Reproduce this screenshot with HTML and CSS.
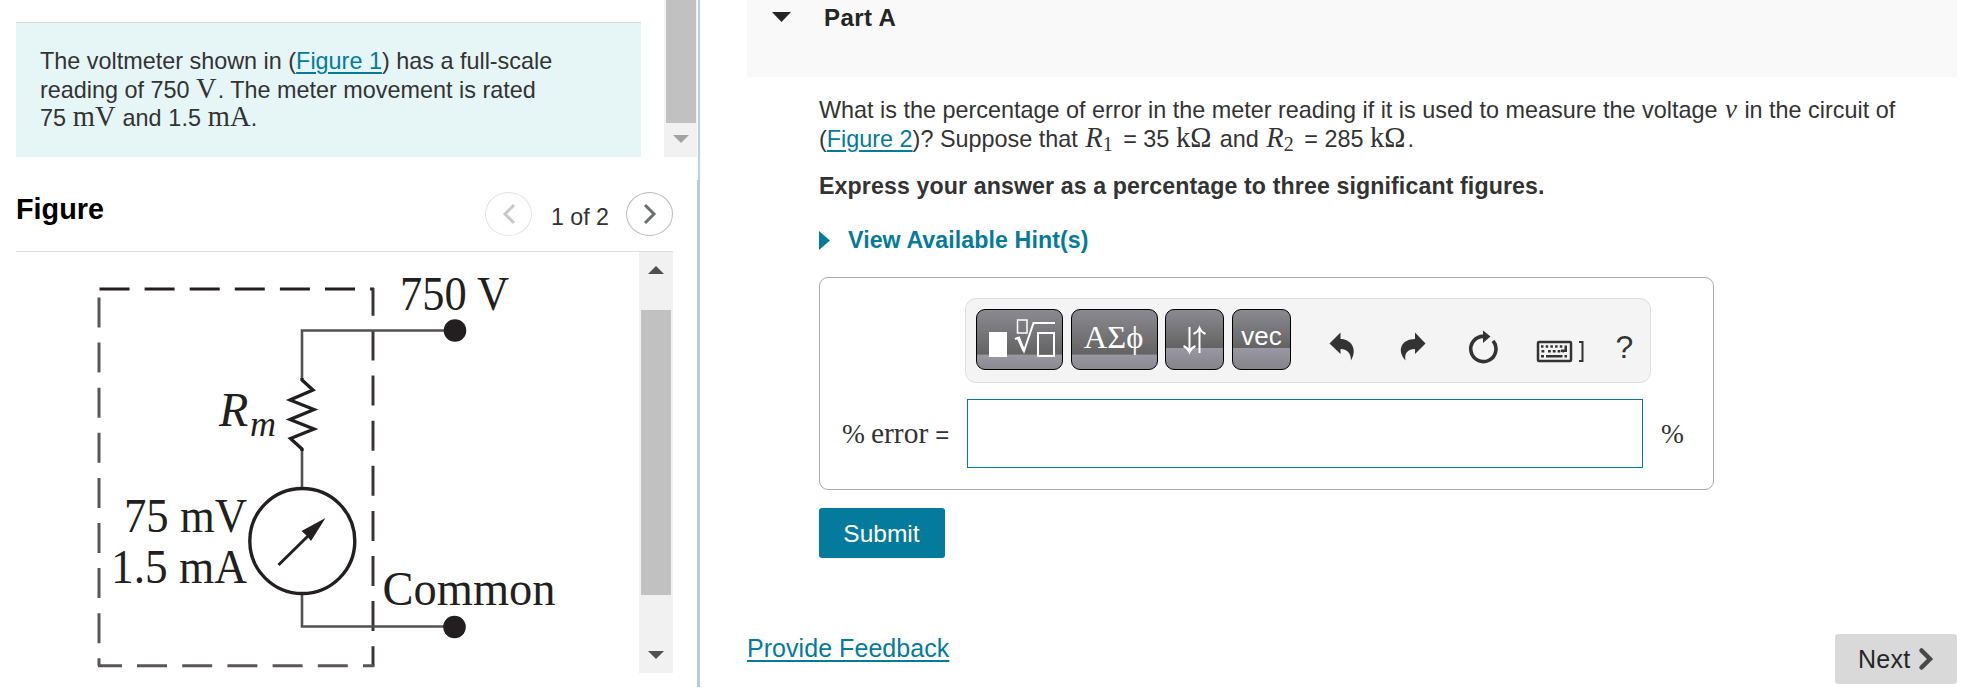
FILE: index.html
```html
<!DOCTYPE html>
<html lang="en">
<head>
<meta charset="utf-8">
<title>Part A</title>
<link rel="stylesheet" href="styles.css">
</head>
<body>
<div class="page">
  <aside class="left">
    <div class="left-main">
      <section class="intro-row">
        <div class="intro">
          <div class="ln l1">The voltmeter shown in (<a href="#">Figure 1</a>) has a full-scale</div>
          <div class="ln l2">reading of 750 <span class="m volt">V</span>. The meter movement is rated</div>
          <div class="ln l3">75 <span class="m">mV</span> and 1.5 <span class="m">mA</span>.</div>
        </div>
        <div class="bar intro-bar">
          <div class="thumb"></div>
          <svg class="arrow" width="16" height="8"><path d="M0 0H16L8 8Z" fill="#a3a3a3"/></svg>
        </div>
      </section>
      <header class="fig-head">
        <h2>Figure</h2>
        <div class="pager">
          <button class="circle off"><svg width="14" height="22" viewBox="0 0 14 22"><path d="M12 2L3 11L12 20" fill="none" stroke="#c7c7c7" stroke-width="3"/></svg></button>
          <span>1 of 2</span>
          <button class="circle"><svg width="14" height="22" viewBox="0 0 14 22"><path d="M2 2L11 11L2 20" fill="none" stroke="#6a7070" stroke-width="3"/></svg></button>
        </div>
      </header>
      <section class="fig-body">
        <svg class="circuit" width="623" height="421" viewBox="16 252 623 421">
          <g fill="none" stroke="#3a3637" stroke-width="3">
            <path d="M99.5 289H374" stroke-dasharray="30 15.1" stroke="#231f20"/>
            <path d="M99 297.5V666" stroke-dasharray="30 15.1" stroke="#5a5657"/>
            <path d="M373 288V315.7M373 330.5V666" stroke-dasharray="30 15.1"/>
            <path d="M98 665.7H122M137 665.7H349M363 665.7H374.5" stroke-dasharray="30 15.2" stroke="#5a5657"/>
            <path d="M455 330.5H302V379M302 449V488M302 594V626.5H455" stroke-width="2.6" stroke="#555152"/>
            <path d="M302 378V380L313 390L290 400L314 409.5L290 419.5L314 429L290.500 438.500L302 449V451" stroke="#231f20" stroke-width="3.300"/>
            <circle cx="302.3" cy="541" r="52.5" stroke="#231f20" stroke-width="3.400"/>
            <path d="M278.5 565L309 535" stroke="#231f20"/>
          </g>
          <g fill="#231f20">
            <path d="M325.5 518L301.5 531L307 536L311 541Z"/>
            <circle cx="455" cy="330.5" r="11.3"/>
            <circle cx="454.5" cy="627" r="11.3"/>
          </g>
          <g class="ctext">
            <text x="400" y="309.5" textLength="109" lengthAdjust="spacingAndGlyphs">750 V</text>
            <text x="219" y="426" class="it">R</text>
            <text x="250" y="435.500" class="it sub" textLength="26" lengthAdjust="spacingAndGlyphs">m</text>
            <text x="124" y="532" textLength="123" lengthAdjust="spacingAndGlyphs">75 mV</text>
            <text x="111" y="582.5" textLength="136" lengthAdjust="spacingAndGlyphs">1.5 mA</text>
            <text x="382.500" y="604.500" textLength="173" lengthAdjust="spacingAndGlyphs">Common</text>
          </g>
        </svg>
        <div class="bar fig-bar">
          <svg width="16" height="8"><path d="M0 8H16L8 0Z" fill="#505050"/></svg>
          <div class="thumb"></div>
          <svg width="16" height="8"><path d="M0 0H16L8 8Z" fill="#505050"/></svg>
        </div>
      </section>
    </div>
    <div class="divider"><div class="d1"></div><div class="d2"></div></div>
  </aside>

  <main class="right">
    <header class="part"><svg width="19" height="10"><path d="M0 0H19L9.500 10Z" fill="#252525"/></svg><h1>Part A</h1></header>
    <div class="content">
      <div class="ln q1">What is the percentage of error in the meter reading if it is used to measure the voltage <span class="m mi v">v</span> in the circuit of</div>
      <div class="ln q2">(<a href="#">Figure 2</a>)? Suppose that <span class="m var"><i>R</i><span class="s">1</span></span> = 35 <span class="m ohm">kΩ</span> and <span class="m var"><i>R</i><span class="s">2</span></span> = 285 <span class="m ohm">kΩ</span>.</div>
      <div class="express"><span>Express your answer as a percentage to three significant figures.</span></div>
      <div class="hints"><svg width="11" height="19"><path d="M0 0L11 9.500L0 19Z" fill="#047a9c"/></svg><span>View Available Hint(s)</span></div>
      <section class="answer">
        <div class="toolbar">
          <button class="tool wide"><svg width="85" height="59" viewBox="977 310 85 59">
            <rect x="989" y="332" width="18" height="25" fill="#fff"/>
            <g fill="none" stroke="#fff"><rect x="1017.500" y="320" width="9.500" height="13" stroke-width="1.500"/><path d="M1015 339L1019 337.500L1024 351L1033.500 323H1055" stroke-width="2"/><path d="M1018 337.500L1024 351" stroke-width="3"/><rect x="1038" y="333" width="16" height="23" stroke-width="2"/></g></svg></button>
          <button class="tool wide greek"><span>ΑΣϕ</span></button>
          <button class="tool third"><svg width="57" height="59" viewBox="1166 310 57 59"><path d="M1189.500 327V351M1183.500 346Q1188 348 1189.500 352Q1191 348 1195.500 346M1199.500 353V329M1193.500 334Q1198 332 1199.500 328Q1201 332 1205.500 334" fill="none" stroke="#fff" stroke-width="2"/></svg></button>
          <button class="tool vec"><span>vec</span></button>
          <svg class="acts" width="353" height="61" viewBox="1291 309 353 61" fill="#333">
            <path d="M1329.500 343.500L1340.500 332.500V339C1351 339 1358 349 1351 360.500C1351 353 1347 349 1340.500 349V354Z"/>
            <path d="M1425.500 343.500L1415 332.500V339C1402 339 1396 350 1405.500 360.500C1404 353 1408 349 1415 349V354Z"/>
            <path d="M1483.300 336.400A12.600 12.600 0 1 0 1493 340.900" fill="none" stroke="#333" stroke-width="3.600"/>
            <path d="M1483 330.500L1490.500 336.500L1483 343Z"/>
            <rect x="1538" y="342" width="33" height="19" rx="1" fill="none" stroke="#333" stroke-width="2.500"/>
            <path d="M1541 346.500H1564" stroke="#333" stroke-width="2.500" stroke-dasharray="2.500 2.200"/>
            <path d="M1541.500 351.300H1546M1548 351.300H1564" stroke="#333" stroke-width="2.500" stroke-dasharray="2.800 2"/>
            <path d="M1561 352H1567V345.500H1564.500V349.500H1561ZM1541 355H1544V357.500H1541ZM1546 355H1562.500V357.500H1546ZM1564.500 355H1567V357.500H1564.500Z"/>
            <path d="M1579 342H1582.500V361H1579" fill="none" stroke="#333" stroke-width="2"/>
            <text x="1615.500" y="357.500" class="help">?</text>
          </svg>
        </div>
        <div class="entry">
          <label for="ans"><span class="pct">%</span><span class="err">error</span><span class="eq">=</span></label>
          <input id="ans" type="text">
          <span class="pct">%</span>
        </div>
      </section>
      <button class="submit">Submit</button>
    </div>
    <footer class="foot">
      <a href="#">Provide Feedback</a>
      <button class="next"><span>Next</span><svg width="16" height="24" viewBox="0 0 16 24"><path d="M3.500 3.500L12 12L3.500 20.500" fill="none" stroke="#484848" stroke-width="4.500" stroke-linecap="round"/></svg></button>
    </footer>
  </main>
</div>
</body>
</html>
```
FILE: styles.css
```css
* { box-sizing: border-box; }
body { margin: 0; background: #fff; overflow: hidden; font-family: "Liberation Sans", Arial, sans-serif; font-size: 24px; color: #333; }
h1, h2 { margin: 0; }
button { font: inherit; padding: 0; margin: 0; }
svg { display: block; flex: none; }
a { color: #047a9c; text-decoration: underline; text-decoration-thickness: 2px; text-underline-offset: 3px; text-decoration-skip-ink: auto; }
.page { display: flex; width: 1984px; height: 700px; }

.left { display: flex; width: 700px; }
.left-main { width: 697px; padding-left: 16px; }
.intro-row { display: flex; justify-content: space-between; height: 157px; }
.intro { width: 625px; height: 135px; margin-top: 22px; padding: 24px 0 0 24px; background: #e6f6f7; border-top: 1px solid #ddd; color: #333; }
.ln { height: 28.600px; line-height: 28.600px; white-space: nowrap; font-size: 23.400px; }
.m { font-family: "Liberation Serif", serif; font-size: 28.500px; line-height: 0; }
.mi { font-style: italic; }
.volt { margin-right: 1px; }
.l3 { letter-spacing: .1px; }
.bar { background: #f1f1f1; display: flex; flex-direction: column; align-items: center; }
.intro-bar { width: 33px; height: 157px; }
.intro-bar .thumb { width: 30px; height: 123px; background: #c1c1c1; }
.intro-bar .arrow { margin-top: 12px; }
.fig-head { display: flex; justify-content: space-between; width: 657px; height: 95px; border-bottom: 1px solid #ddd; }
.fig-head h2 { margin-top: 35px; font-size: 28.800px; line-height: 34px; color: #000; }
.pager { display: flex; margin-top: 35px; height: 44px; align-items: center; }
.pager span { width: 94px; padding-left: 19px; line-height: 28px; padding-top: 5px; white-space: nowrap; font-size: 23.200px; }
.circle { width: 47px; height: 44px; border: 1px solid #bbb; border-radius: 50%; background: #fff; display: flex; align-items: center; justify-content: center; }
.circle.off { border-color: #e3e3e3; }
.fig-body { display: flex; width: 657px; height: 421px; }
.fig-bar { width: 34px; padding: 14px 0; justify-content: flex-start; }
.fig-bar .thumb { width: 30px; height: 285px; margin: 36px 0 56px; background: #c1c1c1; }
.ctext { font-family: "Liberation Serif", serif; font-size: 48px; fill: #231f20; }
.ctext .it { font-style: italic; }
.ctext .sub { font-size: 35px; }
.divider { width: 3px; height: 687px; display: flex; flex-direction: column; }
.d1 { width: 2px; margin-left: 1px; height: 180px; background: #bccfe0; }
.d2 { height: 507px; background: #b8cbdc; }

.right { width: 1257px; padding-left: 47px; }
.part { height: 77px; width: 1210px; background: #f9f9f9; display: flex; align-items: flex-start; padding-left: 25px; color: #252525; }
.part svg { margin-top: 12px; }
.part h1 { font-size: 24px; line-height: 28px; margin: 4px 0 0 33px; letter-spacing: .4px; }
.content { padding: 19px 0 0 72px; }
.v { margin: 0 1px; font-size: 27px; }
.var { margin: 0 4px 0 1px; }
.var .s { font-size: 20px; position: relative; top: 4px; }
.ohm { margin-right: 2px; }
.express { height: 28px; line-height: 28px; margin-top: 19px; font-size: 23.200px; font-weight: bold; letter-spacing: .1px; white-space: nowrap; }
.hints { display: flex; align-items: center; gap: 18px; height: 28px; margin-top: 26px; font-size: 23.200px; font-weight: bold; letter-spacing: .08px; color: #047a9c; white-space: nowrap; }
.answer { width: 895px; height: 213px; margin-top: 23px; padding: 20px 0 0 22px; border: 1px solid #aaa; border-radius: 9px; }
.toolbar { width: 686px; height: 85px; margin-left: 123px; padding: 10px 0 0 10px; display: flex; gap: 8px; background: #f4f4f4; border: 1px solid #ddd; border-radius: 11px; }
.tool { width: 59px; height: 61px; flex: none; border: 1px solid #000; border-radius: 9px; overflow: hidden; color: #fff; display: flex; align-items: center; justify-content: center; background: linear-gradient(#8b8a90 0, #636363 64%, #9997a2 65%, #858488 100%); }
.tool.wide { width: 87px; background: linear-gradient(#8b8a90 0, #636363 75%, #9997a2 76%, #8b8a90 100%); }
.third { margin-left: -1px; }
.greek { font-family: "Liberation Serif", serif; font-size: 32.500px; }
.greek span { margin: -5px 2px 0 0; }
.vec span { font-size: 26px; margin-top: -7px; }
.acts { margin-left: -8px; }
.help { font-size: 32px; }
.entry { display: flex; align-items: center; margin-top: 16px; height: 69px; }
.entry label { width: 125px; display: flex; align-items: baseline; color: #333; }
.pct, .err { font-family: "Liberation Serif", serif; font-size: 29.500px; }
.pct { font-size: 27.500px; }
.err { margin-left: 6px; }
.eq { margin-left: 7px; font-size: 24px; }
.entry input { width: 676px; height: 69px; border: 1px solid #047a9c; margin: 0 18px 0 0; padding: 0; background: #fff; }
.submit { display: block; width: 126px; height: 50px; margin-top: 18px; border: 0; border-radius: 3px; background: #047a9c; color: #fff; font-size: 24.500px; padding: 2px 1px 0 0; }
.foot { display: flex; justify-content: space-between; width: 1210px; margin-top: 76px; font-size: 25px; }
.foot a { letter-spacing: .05px; }
.next { width: 122px; height: 50px; border: 0; border-radius: 3px; background: #d9d9d9; color: #252525; display: flex; align-items: center; padding-left: 23px; gap: 7px; letter-spacing: .3px; }
```
